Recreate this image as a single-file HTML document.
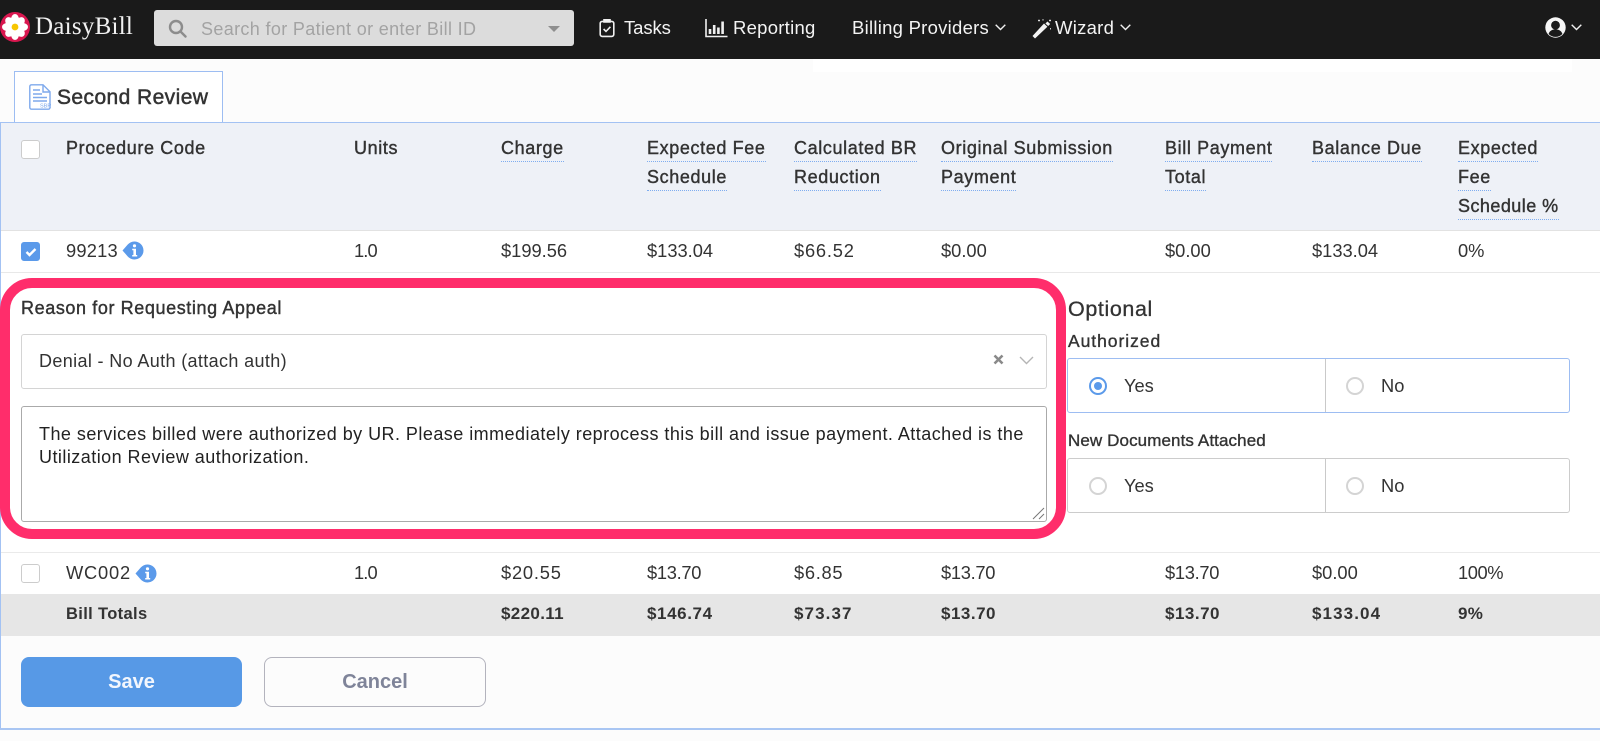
<!DOCTYPE html>
<html><head><meta charset="utf-8"><title>Second Review</title>
<style>
html,body{margin:0;padding:0}
body{width:1600px;height:741px;position:relative;overflow:hidden;background:#fcfcfc;font-family:"Liberation Sans",sans-serif;color:#333;font-size:18.3px}
.a{position:absolute}
.t{position:absolute;line-height:20px;white-space:nowrap}
.h{position:absolute;line-height:20px;white-space:nowrap;font-size:18px;letter-spacing:.62px;-webkit-text-stroke:.4px #333;height:22px}
.u{border-bottom:1px dotted #7fadf0}
.n{color:#f4f4f4;font-size:18.5px;letter-spacing:.26px}
.b{font-weight:700;font-size:17px;letter-spacing:.35px}
.cb{position:absolute;left:21px;width:17px;height:17px;border:1px solid #ccc;border-radius:3px;background:#fff}
.r{position:absolute;width:14px;height:14px;border:2.5px solid #d4d4d4;border-radius:50%;background:#fff}
.box{position:absolute;left:1067px;width:503px;border:1px solid #ccc;border-radius:3px;background:#fff;box-sizing:border-box}
</style></head><body>

<!-- nav -->
<div class="a" style="left:0;top:0;width:1600px;height:59px;background:#1a1a1a"></div>
<svg class="a" style="left:0;top:12px" width="30" height="30" viewBox="0 0 30 30">
<circle cx="15" cy="15" r="15" fill="#d9174f"/>
<g fill="#fff"><ellipse cx="15" cy="7.5" rx="4" ry="5.5"/><ellipse cx="15" cy="22.5" rx="4" ry="5.5"/><ellipse cx="7.5" cy="15" rx="5.5" ry="4"/><ellipse cx="22.5" cy="15" rx="5.5" ry="4"/>
<ellipse cx="9.7" cy="9.7" rx="4" ry="5" transform="rotate(-45 9.7 9.7)"/><ellipse cx="20.3" cy="9.7" rx="4" ry="5" transform="rotate(45 20.3 9.7)"/><ellipse cx="9.7" cy="20.3" rx="4" ry="5" transform="rotate(45 9.7 20.3)"/><ellipse cx="20.3" cy="20.3" rx="4" ry="5" transform="rotate(-45 20.3 20.3)"/></g>
<circle cx="15" cy="15" r="3.4" fill="#f7c600"/></svg>
<div class="t" style="left:35px;top:17px;font-family:'Liberation Serif',serif;font-size:25px;color:#f2f2f2;letter-spacing:.25px">DaisyBill</div>

<div class="a" style="left:154px;top:10px;width:420px;height:36px;background:#dcdcdc;border-radius:3px"></div>
<svg class="a" style="left:168px;top:19px" width="19" height="19" viewBox="0 0 19 19" fill="none" stroke="#8c8c8c" stroke-width="2.4"><circle cx="8" cy="8" r="6"/><path d="M12.5 12.5L17.5 17.5" stroke-linecap="round"/></svg>
<div class="t" style="left:201px;top:19px;color:#a3a3a3;font-size:18px;letter-spacing:.35px">Search for Patient or enter Bill ID</div>
<div class="a" style="left:548px;top:26px;border-left:6px solid transparent;border-right:6px solid transparent;border-top:6px solid #8e8e8e"></div>

<svg class="a" style="left:599px;top:18px" width="16" height="20" viewBox="0 0 16 20" fill="none" stroke="#f0f0f0" stroke-width="1.6"><rect x="1.2" y="3.4" width="13.6" height="15" rx="2"/><path d="M5 4V1.8h6V4z" fill="#f0f0f0"/><path d="M4.6 11l2.4 2.4 4.4-4.6"/></svg>
<div class="t n" style="left:624px;top:18px;letter-spacing:-.1px">Tasks</div>
<svg class="a" style="left:705px;top:18px" width="23" height="21" viewBox="0 0 23 21" fill="none" stroke="#f0f0f0"><path d="M1 1v17.5h21.5" stroke-width="1.6"/><path d="M5 16V11M9.2 16V7M13.4 16V9.5M17.6 16V3.5" stroke-width="2.6"/></svg>
<div class="t n" style="left:733px;top:18px">Reporting</div>
<div class="t n" style="left:852px;top:18px">Billing Providers</div>
<svg class="a" style="left:995px;top:24px" width="11" height="7" viewBox="0 0 11 7" fill="none" stroke="#f0f0f0" stroke-width="1.4"><path d="M.7.7l4.8 4.8L10.3.7"/></svg>
<svg class="a" style="left:1032px;top:18px" width="20" height="21" viewBox="0 0 20 21"><path d="M3 20.500L.5 18 12 5.500l3.400 3.200z" fill="#f4f4f4"/><path d="M15.500 3.500l2.700 2.500-2 2-2.800-2.500z" fill="#f4f4f4"/><path d="M6 2.500h2M7 1.500v2M11 1v1.600M18 1.500v2M17 2.500h2M18.500 10v1.500" stroke="#ddd" stroke-width=".9"/></svg>
<div class="t n" style="left:1055px;top:18px">Wizard</div>
<svg class="a" style="left:1120px;top:24px" width="11" height="7" viewBox="0 0 11 7" fill="none" stroke="#f0f0f0" stroke-width="1.4"><path d="M.7.7l4.8 4.8L10.3.7"/></svg>
<svg class="a" style="left:1545px;top:17px" width="21" height="21" viewBox="0 0 21 21"><circle cx="10.5" cy="10.5" r="10.2" fill="#f6f6f6"/><circle cx="10.5" cy="8.2" r="4.4" fill="#1a1a1a"/><path d="M3.6 17c1-3.2 3.6-4.6 6.9-4.6s5.900 1.400 6.900 4.600c-1.800 1.900-4.200 2.900-6.900 2.900S5.400 18.900 3.600 17z" fill="#1a1a1a"/></svg>
<svg class="a" style="left:1571px;top:24px" width="11" height="7" viewBox="0 0 11 7" fill="none" stroke="#f0f0f0" stroke-width="1.4"><path d="M.7.7l4.8 4.8L10.3.7"/></svg>

<div class="a" style="left:813px;top:59px;width:759px;height:13px;background:#fff"></div>

<!-- tab -->
<div class="a" style="left:14px;top:71px;width:207px;height:51px;border:1px solid #9dbdf2;border-bottom:0;background:#fff"></div>
<svg class="a" style="left:29px;top:84px" width="22" height="26" viewBox="0 0 22 26" fill="none" stroke="#7ea9ec" stroke-width="1.4"><path d="M2.500.8H14l7 7v15.700a1.700 1.700 0 0 1-1.700 1.700H2.500A1.700 1.700 0 0 1 .8 23.500V2.500A1.700 1.700 0 0 1 2.500.8z"/><path d="M14 1v7h7M4 6h7M4 10h9M4 13.500h14M4 17h14"/><text x="11" y="23.500" font-size="5.500" fill="#7ea9ec" stroke="none" font-family="Liberation Sans">SBR</text></svg>
<div class="t" style="left:57px;top:88px;font-size:21px;letter-spacing:.42px;-webkit-text-stroke:.5px #333">Second Review</div>

<!-- table bg -->
<div class="a" style="left:0;top:122px;width:1600px;height:1px;background:#a3c2f3"></div>
<div class="a" style="left:1px;top:123px;width:1599px;height:107px;background:#eef1f7"></div>
<div class="a" style="left:1px;top:230px;width:1599px;height:1px;background:#e2e2e2"></div>
<div class="a" style="left:1px;top:231px;width:1599px;height:41px;background:#fff"></div>
<div class="a" style="left:1px;top:272px;width:1599px;height:1px;background:#e8e8e8"></div>
<div class="a" style="left:1px;top:273px;width:1599px;height:279px;background:#fff"></div>
<div class="a" style="left:1px;top:552px;width:1599px;height:1px;background:#eaeaea"></div>
<div class="a" style="left:1px;top:553px;width:1599px;height:41px;background:#fff"></div>
<div class="a" style="left:1px;top:594px;width:1599px;height:42px;background:#e6e6e6"></div>
<div class="a" style="left:0;top:122px;width:1px;height:606px;background:#a3c2f3"></div>
<div class="a" style="left:0;top:728px;width:1600px;height:2px;background:#a9c6f3"></div>

<!-- header -->
<div class="cb" style="top:140px"></div>
<div class="h" style="left:66px;top:138px">Procedure Code</div>
<div class="h" style="left:354px;top:138px">Units</div>
<div class="h u" style="left:501px;top:138px;height:23px">Charge</div>
<div class="h u" style="left:647px;top:138px;height:23px">Expected Fee</div>
<div class="h u" style="left:647px;top:167px;height:23px">Schedule</div>
<div class="h u" style="left:794px;top:138px;height:23px">Calculated BR</div>
<div class="h u" style="left:794px;top:167px;height:23px">Reduction</div>
<div class="h u" style="left:941px;top:138px;height:23px">Original Submission</div>
<div class="h u" style="left:941px;top:167px;height:23px">Payment</div>
<div class="h u" style="left:1165px;top:138px;height:23px">Bill Payment</div>
<div class="h u" style="left:1165px;top:167px;height:23px">Total</div>
<div class="h u" style="left:1312px;top:138px;height:23px">Balance Due</div>
<div class="h u" style="left:1458px;top:138px;height:23px">Expected</div>
<div class="h u" style="left:1458px;top:167px;height:23px">Fee</div>
<div class="h u" style="left:1458px;top:196px;height:23px;letter-spacing:.45px">Schedule %</div>

<!-- row 1 -->
<div class="cb" style="top:242px;background:#5b9aea;border-color:#5b9aea"></div>
<svg class="a" style="left:25px;top:247px" width="12" height="10" viewBox="0 0 12 10" fill="none" stroke="#fff" stroke-width="2.400"><path d="M1.500 5l3 3 6-6"/></svg>
<div class="t" style="left:66px;top:241px;letter-spacing:.2px">99213</div>
<svg class="a" style="left:122px;top:240px" width="22" height="21" viewBox="0 0 22 21"><path d="M.5 10.500L5.750 4.550A9 9 0 1 1 5.750 16.450z" fill="#5b9aea"/><circle cx="12.500" cy="5.800" r="1.600" fill="#fff"/><path d="M10.200 8.800h3.800v6.200h1.200v1.500h-5v-1.500h1.200V10.300h-1.200z" fill="#fff"/></svg>
<div class="t" style="left:354px;top:241px;letter-spacing:-.9px">1.0</div>
<div class="t" style="left:501px;top:241px">$199.56</div>
<div class="t" style="left:647px;top:241px">$133.04</div>
<div class="t" style="left:794px;top:241px;letter-spacing:.8px">$66.52</div>
<div class="t" style="left:941px;top:241px">$0.00</div>
<div class="t" style="left:1165px;top:241px">$0.00</div>
<div class="t" style="left:1312px;top:241px">$133.04</div>
<div class="t" style="left:1458px;top:241px">0%</div>

<!-- left form -->
<div class="t" style="left:21px;top:298px;font-size:18px;letter-spacing:.6px;-webkit-text-stroke:.4px #333">Reason for Requesting Appeal</div>
<div class="a" style="left:21px;top:334px;width:1024px;height:53px;border:1px solid #d4d4d4;border-radius:3px;background:#fff"></div>
<div class="t" style="left:39px;top:351px;font-size:18px;letter-spacing:.36px">Denial - No Auth (attach auth)</div>
<svg class="a" style="left:993px;top:354px" width="11" height="11" viewBox="0 0 11 11" stroke="#8a8a8a" stroke-width="2.600"><path d="M1.500 1.500l8 8M9.500 1.500l-8 8"/></svg>
<svg class="a" style="left:1019px;top:356px" width="15" height="9" viewBox="0 0 15 9" fill="none" stroke="#b5b5b5" stroke-width="1.400"><path d="M1 1l6.500 6.500L14 1"/></svg>
<div class="a" style="left:21px;top:406px;width:1024px;height:114px;border:1px solid #aaa;border-radius:3px;background:#fff"></div>
<div class="t" style="left:39px;top:424px;color:#222;font-size:18px;letter-spacing:.46px">The services billed were authorized by UR. Please immediately reprocess this bill and issue payment. Attached is the</div>
<div class="t" style="left:39px;top:447px;color:#222;font-size:18px;letter-spacing:.46px">Utilization Review authorization.</div>
<svg class="a" style="left:1032px;top:507px" width="13" height="13" viewBox="0 0 13 13" stroke="#777" stroke-width="1"><path d="M1 12L12 1M7 12l5-5"/></svg>

<!-- pink outline -->
<div class="a" style="left:0;top:278px;width:1066px;height:261px;box-sizing:border-box;border:10.500px solid #ff2d6b;border-radius:32px"></div>

<!-- optional -->
<div class="t" style="left:1068px;top:299px;font-size:21.500px;letter-spacing:.6px;color:#333;-webkit-text-stroke:.3px #333">Optional</div>
<div class="t" style="left:1068px;top:331px;font-size:17.500px;letter-spacing:.95px;-webkit-text-stroke:.35px #333">Authorized</div>
<div class="box" style="top:358px;height:55px;border-color:#9dbdf2"></div>
<div class="a" style="left:1325px;top:359px;width:1px;height:53px;background:#c9c9c9"></div>
<div class="r" style="left:1088.500px;top:376.500px;border-color:#5b9aea"></div>
<div class="a" style="left:1094px;top:382px;width:8px;height:8px;border-radius:50%;background:#5b9aea"></div>
<div class="t" style="left:1124px;top:376px">Yes</div>
<div class="r" style="left:1345.500px;top:376.500px"></div>
<div class="t" style="left:1381px;top:376px">No</div>
<div class="t" style="left:1068px;top:431px;font-size:17px;letter-spacing:.1px;-webkit-text-stroke:.35px #333">New Documents Attached</div>
<div class="box" style="top:458px;height:55px"></div>
<div class="a" style="left:1325px;top:459px;width:1px;height:53px;background:#c9c9c9"></div>
<div class="r" style="left:1088.500px;top:476.500px"></div>
<div class="t" style="left:1124px;top:476px">Yes</div>
<div class="r" style="left:1345.500px;top:476.500px"></div>
<div class="t" style="left:1381px;top:476px">No</div>

<!-- row 2 -->
<div class="cb" style="top:564px"></div>
<div class="t" style="left:66px;top:563px;letter-spacing:.8px">WC002</div>
<svg class="a" style="left:135px;top:563px" width="22" height="21" viewBox="0 0 22 21"><path d="M.5 10.500L5.750 4.550A9 9 0 1 1 5.750 16.450z" fill="#5b9aea"/><circle cx="12.500" cy="5.800" r="1.600" fill="#fff"/><path d="M10.200 8.800h3.800v6.200h1.200v1.500h-5v-1.500h1.200V10.300h-1.200z" fill="#fff"/></svg>
<div class="t" style="left:354px;top:563px;letter-spacing:-.9px">1.0</div>
<div class="t" style="left:501px;top:563px;letter-spacing:.8px">$20.55</div>
<div class="t" style="left:647px;top:563px;letter-spacing:-.3px">$13.70</div>
<div class="t" style="left:794px;top:563px;letter-spacing:.7px">$6.85</div>
<div class="t" style="left:941px;top:563px;letter-spacing:-.3px">$13.70</div>
<div class="t" style="left:1165px;top:563px;letter-spacing:-.3px">$13.70</div>
<div class="t" style="left:1312px;top:563px">$0.00</div>
<div class="t" style="left:1458px;top:563px;letter-spacing:-.4px">100%</div>

<!-- totals -->
<div class="t b" style="left:66px;top:604px;font-size:16.500px">Bill Totals</div>
<div class="t b" style="left:501px;top:604px">$220.11</div>
<div class="t b" style="left:647px;top:604px;letter-spacing:.6px">$146.74</div>
<div class="t b" style="left:794px;top:604px;letter-spacing:1.1px">$73.37</div>
<div class="t b" style="left:941px;top:604px;letter-spacing:.5px">$13.70</div>
<div class="t b" style="left:1165px;top:604px;letter-spacing:.5px">$13.70</div>
<div class="t b" style="left:1312px;top:604px;letter-spacing:1.100px">$133.04</div>
<div class="t b" style="left:1458px;top:604px">9%</div>

<!-- buttons -->
<div class="a" style="left:21px;top:657px;width:221px;height:50px;background:#5799e6;border-radius:8px;color:#f2f6fd;font-weight:700;font-size:20px;line-height:50px;text-align:center">Save</div>
<div class="a" style="left:264px;top:657px;width:220px;height:48px;border:1px solid #b3b3bd;border-radius:8px;background:#fcfcfc;color:#7f8499;font-weight:700;font-size:20px;line-height:48px;text-align:center">Cancel</div>
</body></html>
